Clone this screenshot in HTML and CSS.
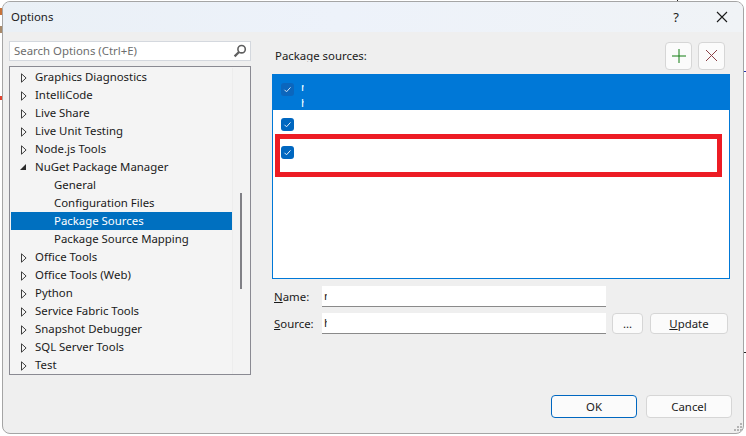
FILE: index.html
```html
<!DOCTYPE html>
<html lang="en">
<head>
<meta charset="utf-8">
<title>Options</title>
<link rel="stylesheet" href="styles.css">
</head>
<body>
<svg class="defs" width="0" height="0"><symbol id="t" viewBox="0 0 7 10"><path d="M1.5 .8v8.4l4.6-4.2z" fill="#f8f8f8" stroke="#2a2a2a" stroke-width=".9"/></symbol></svg>
<i class="spot s1"></i><i class="spot s2"></i><i class="spot s3"></i><i class="spot s4"></i><i class="spot s5"></i><i class="spot s6"></i>
<div class="dialog">
  <header class="titlebar">
    <span class="title">Options</span>
    <span class="help">?</span>
    <svg class="close" width="12" height="12" viewBox="0 0 12 12"><path d="M1 1l10 10M11 1L1 11" stroke="#1a1a1a" stroke-width="1.1" fill="none"/></svg>
  </header>
  <div class="body">
    <aside class="left">
      <div class="search">
        <span class="search-text">Search Options (Ctrl+E)</span>
        <svg width="14" height="14" viewBox="0 0 14 14"><circle cx="8.6" cy="5.2" r="3.7" fill="none" stroke="#5f5f5f" stroke-width="1.6"/><path d="M6 8L1.6 12.4" stroke="#5f5f5f" stroke-width="2.2"/></svg>
      </div>
      <div class="tree">
        <div class="rows">
          <div class="row"><svg class="tri"><use href="#t"/></svg>Graphics Diagnostics</div>
          <div class="row"><svg class="tri"><use href="#t"/></svg>IntelliCode</div>
          <div class="row"><svg class="tri"><use href="#t"/></svg>Live Share</div>
          <div class="row"><svg class="tri"><use href="#t"/></svg>Live Unit Testing</div>
          <div class="row"><svg class="tri"><use href="#t"/></svg>Node.js Tools</div>
          <div class="row"><i class="open"></i>NuGet Package Manager</div>
          <div class="row child">General</div>
          <div class="row child">Configuration Files</div>
          <div class="row child selected">Package Sources</div>
          <div class="row child">Package Source Mapping</div>
          <div class="row"><svg class="tri"><use href="#t"/></svg>Office Tools</div>
          <div class="row"><svg class="tri"><use href="#t"/></svg>Office Tools (Web)</div>
          <div class="row"><svg class="tri"><use href="#t"/></svg>Python</div>
          <div class="row"><svg class="tri"><use href="#t"/></svg>Service Fabric Tools</div>
          <div class="row"><svg class="tri"><use href="#t"/></svg>Snapshot Debugger</div>
          <div class="row"><svg class="tri"><use href="#t"/></svg>SQL Server Tools</div>
          <div class="row"><svg class="tri"><use href="#t"/></svg>Test</div>
        </div>
        <div class="scroll"><div class="thumb"></div></div>
      </div>
    </aside>
    <main class="right">
      <div class="head">
        <span class="head-label">Package sources:</span>
        <div class="tools">
          <button class="tool"><svg width="14" height="14" viewBox="0 0 14 14"><path d="M7 0v14M0 7h14" stroke="#107c10" stroke-width="1"/></svg></button>
          <button class="tool"><svg width="13" height="13" viewBox="0 0 13 13"><path d="M1 1l11 11M12 1L1 12" stroke="#8a4046" stroke-width="1"/></svg></button>
        </div>
      </div>
      <div class="sources">
        <div class="src active">
          <span class="check dark"><svg width="9" height="9" viewBox="0 0 9 9"><path d="M1.5 4.8l2 2 4-4.4" stroke="#cfe2f5" fill="none"/></svg></span>
          <div class="src-text"><span class="clip">nuget.org</span><span class="clip">https</span></div>
        </div>
        <div class="src second">
          <span class="check"><svg width="9" height="9" viewBox="0 0 9 9"><path d="M1.5 4.8l2 2 4-4.4" stroke="#e4eef9" fill="none"/></svg></span>
        </div>
        <div class="src">
          <span class="check"><svg width="9" height="9" viewBox="0 0 9 9"><path d="M1.5 4.8l2 2 4-4.4" stroke="#e4eef9" fill="none"/></svg></span>
        </div>
        <div class="mark"></div>
      </div>
      <div class="field">
        <label class="lbl"><u>N</u>ame:</label>
        <div class="input"><span class="clip">nuget</span></div>
      </div>
      <div class="field">
        <label class="lbl"><u>S</u>ource:</label>
        <div class="input"><span class="clip">https</span></div>
        <button class="btn dots">...</button>
        <button class="btn update"><u>U</u>pdate</button>
      </div>
      <div class="actions">
        <button class="btn action default">OK</button>
        <button class="btn action">Cancel</button>
      </div>
    </main>
  </div>
  <svg class="grip" width="10" height="10" viewBox="0 0 10 10"><path d="M7 0h2v2H7zM4 3h2v2H4zM7 3h2v2H7zM1 6h2v2H1zM4 6h2v2H4zM7 6h2v2H7z" fill="#b4b4b4"/></svg>
</div>
</body>
</html>
```
FILE: styles.css
```css
* { box-sizing: border-box; }
html, body { margin: 0; height: 100%; }
body {
  position: relative;
  width: 746px;
  height: 436px;
  padding: 1px 2px 2px 2px;
  background: #fff;
  overflow: hidden;
  font: 11.4px "Noto Sans", "Open Sans", sans-serif;
  color: #1a1a1a;
}
.defs { position: absolute; }
.spot { position: absolute; display: block; }
.s1 { left: 0; top: 8px; width: 2px; height: 7px; background: #c8733a; }
.s2 { left: 0; top: 26px; width: 2px; height: 7px; background: #a88a6a; }
.s3 { left: 0; top: 96px; width: 2px; height: 4px; background: #e2402c; }
.s4 { left: 677px; top: 0; width: 1px; height: 2px; background: #222; }
.s5 { left: 744px; top: 71px; width: 2px; height: 1px; background: #2233aa; }
.s6 { left: 744px; top: 352px; width: 2px; height: 1px; background: #222; }
.dialog {
  position: relative;
  width: 742px;
  height: 433px;
  background: #efefef;
  border: 1px solid #a5a5a5;
  border-radius: 8px;
  overflow: hidden;
  display: flex;
  flex-direction: column;
}
.titlebar {
  height: 30px;
  flex: none;
  display: flex;
  align-items: center;
  padding: 0 15px 0 8px;
  background: linear-gradient(90deg, #eaf0f6, #edf2fa 45%, #f0f3f6);
}
.title { flex: 1; padding-bottom: 2px; }
.help { margin-right: 37px; font-size: 13px; }
.body { flex: 1; display: flex; min-height: 0; padding: 9px 0 0 6px; }
.left { width: 242px; flex: none; }
.search {
  height: 20px;
  display: flex;
  align-items: center;
  justify-content: space-between;
  padding: 0 3px 0 4px;
  background: #fff;
  border: 1px solid #d4d8de;
  color: #6d6d6d;
}
.search-text { padding-bottom: 2px; }
.tree {
  margin-top: 5px;
  height: 309px;
  border: 1px solid #8a8a92;
  background: #f4f4f4;
  display: flex;
  overflow: hidden;
  padding-top: 1px;
}
.rows { width: 221px; margin-left: 1px; flex: none; }
.row { height: 18px; line-height: 18px; padding-left: 24px; white-space: nowrap; position: relative; }
.row.child { padding-left: 43px; }
.selected { background: #0070c0; color: #fff; }
.tri { position: absolute; left: 9px; top: 5px; width: 7px; height: 10px; }
.open {
  position: absolute;
  left: 9px;
  top: 6px;
  width: 0;
  height: 0;
  border-bottom: 6px solid #2b2b2b;
  border-left: 6px solid transparent;
}
.scroll { flex: 1; border-left: 1px solid #ededed; background: #f3f3f3; position: relative; }
.thumb { position: absolute; left: 7px; top: 125px; width: 2px; height: 96px; background: #808086; }
.right { flex: 1; padding-left: 21px; position: relative; }
.head { height: 33px; display: flex; align-items: center; justify-content: space-between; padding: 0 18px 4px 3px; }
.head-label { height: 13px; line-height: 14px; overflow: hidden; }
.tools { display: flex; gap: 6px; }
.tool {
  width: 27px;
  height: 28px;
  padding: 0;
  background: #fbfbfb;
  border: 1px solid #d6d6d6;
  border-radius: 4px;
  display: flex;
  align-items: center;
  justify-content: center;
}
.sources {
  position: relative;
  width: 458px;
  height: 205px;
  background: #fff;
  border: 1px solid #0078d7;
  border-top: 0;
}
.src { height: 28px; display: flex; align-items: center; padding-left: 8px; }
.src.active { height: 36px; margin: 0 -1px; padding-left: 9px; background: #0078d7; color: #fff; align-items: flex-start; padding-top: 9px; }
.check {
  width: 13px;
  height: 13px;
  flex: none;
  border-radius: 3px;
  background: #0067c0;
  display: flex;
  align-items: center;
  justify-content: center;
}
.check.dark { background: #0b66bd; }
.src-text { display: flex; flex-direction: column; margin: -4px 0 0 7px; line-height: 16px; }
.clip { display: block; width: 3px; overflow: hidden; white-space: nowrap; }
.mark {
  position: absolute;
  left: 2px;
  top: 60px;
  width: 447px;
  height: 43px;
  border: 5px solid #ed1c24;
}
.field { display: flex; align-items: center; height: 21px; margin-top: 6px; }
.sources + .field { margin-top: 7px; }
.lbl { width: 50px; padding-left: 2px; padding-bottom: 1px; }
.input {
  width: 284px;
  height: 21px;
  background: #fff;
  border-bottom: 1px solid #8a8a8a;
  padding-left: 2px;
  line-height: 19px;
  overflow: hidden;
}
.btn {
  font: inherit;
  color: inherit;
  padding: 0;
  background: #fbfbfb;
  border: 1px solid #d6d6d6;
  border-radius: 4px;
}
.dots { width: 31px; height: 21px; margin-left: 6px; }
.update { width: 78px; height: 21px; margin-left: 7px; padding-bottom: 1px; }
.actions { position: absolute; right: 11px; top: 354px; display: flex; gap: 9px; }
.action { width: 86px; height: 23px; }
.default { border-color: #0067c0; }
.grip { position: absolute; right: 0; bottom: 0; }
```
